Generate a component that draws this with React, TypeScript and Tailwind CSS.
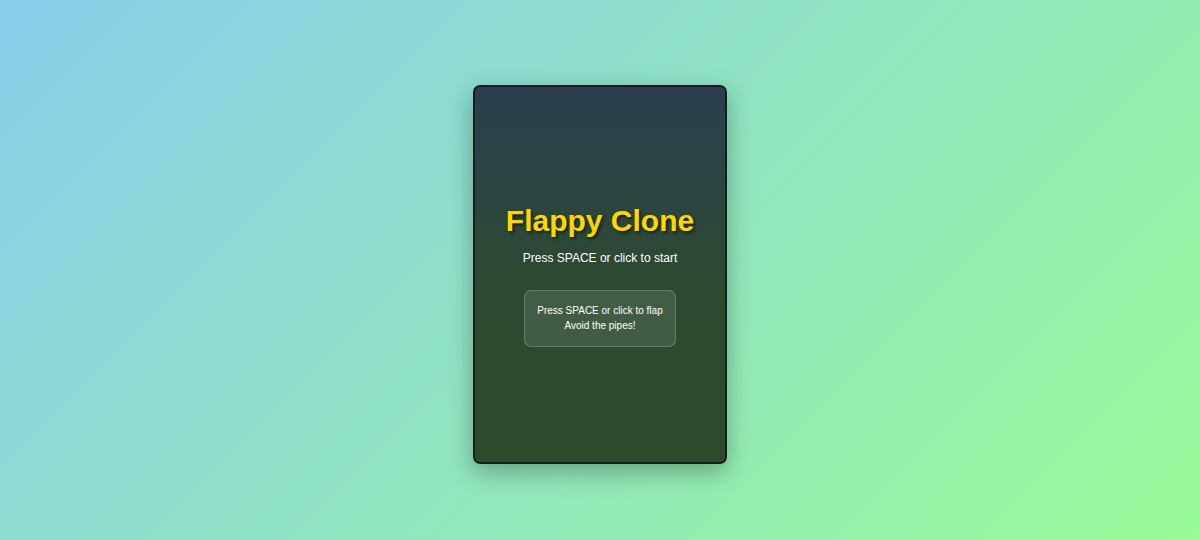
export default function App() {
  return (
    <div
      className="w-full h-[540px] pt-[9px] flex items-center justify-center bg-[linear-gradient(135deg,#87ceeb_0%,#98fb98_100%)]"
      style={{ fontFamily: '"Liberation Sans", Arial, sans-serif' }}
    >
      <div className="w-[254px] h-[379px] rounded-[7px] border-2 border-[#1b1f1b] shadow-[0_8px_25px_rgba(0,0,0,0.3)] bg-[linear-gradient(180deg,#2c3e50_0%,#2d4a30_55%,#2d4a2b_100%)] flex flex-col items-center justify-center">
        <div className="text-[30px] leading-[36px] font-bold text-[#ffd700] [text-shadow:2px_2px_3px_rgba(0,0,0,0.5)]">
          Flappy Clone
        </div>
        <div className="mt-[12px] text-[12px] leading-[14px] text-white">
          Press SPACE or click to start
        </div>
        <div className="mt-[25px] px-[12.5px] py-[12.5px] rounded-[7px] border border-[rgba(255,255,255,0.2)] bg-[rgba(255,255,255,0.1)] text-[10px] leading-[15px] text-white text-center">
          <div>Press SPACE or click to flap</div>
          <div>Avoid the pipes!</div>
        </div>
      </div>
    </div>
  );
}
